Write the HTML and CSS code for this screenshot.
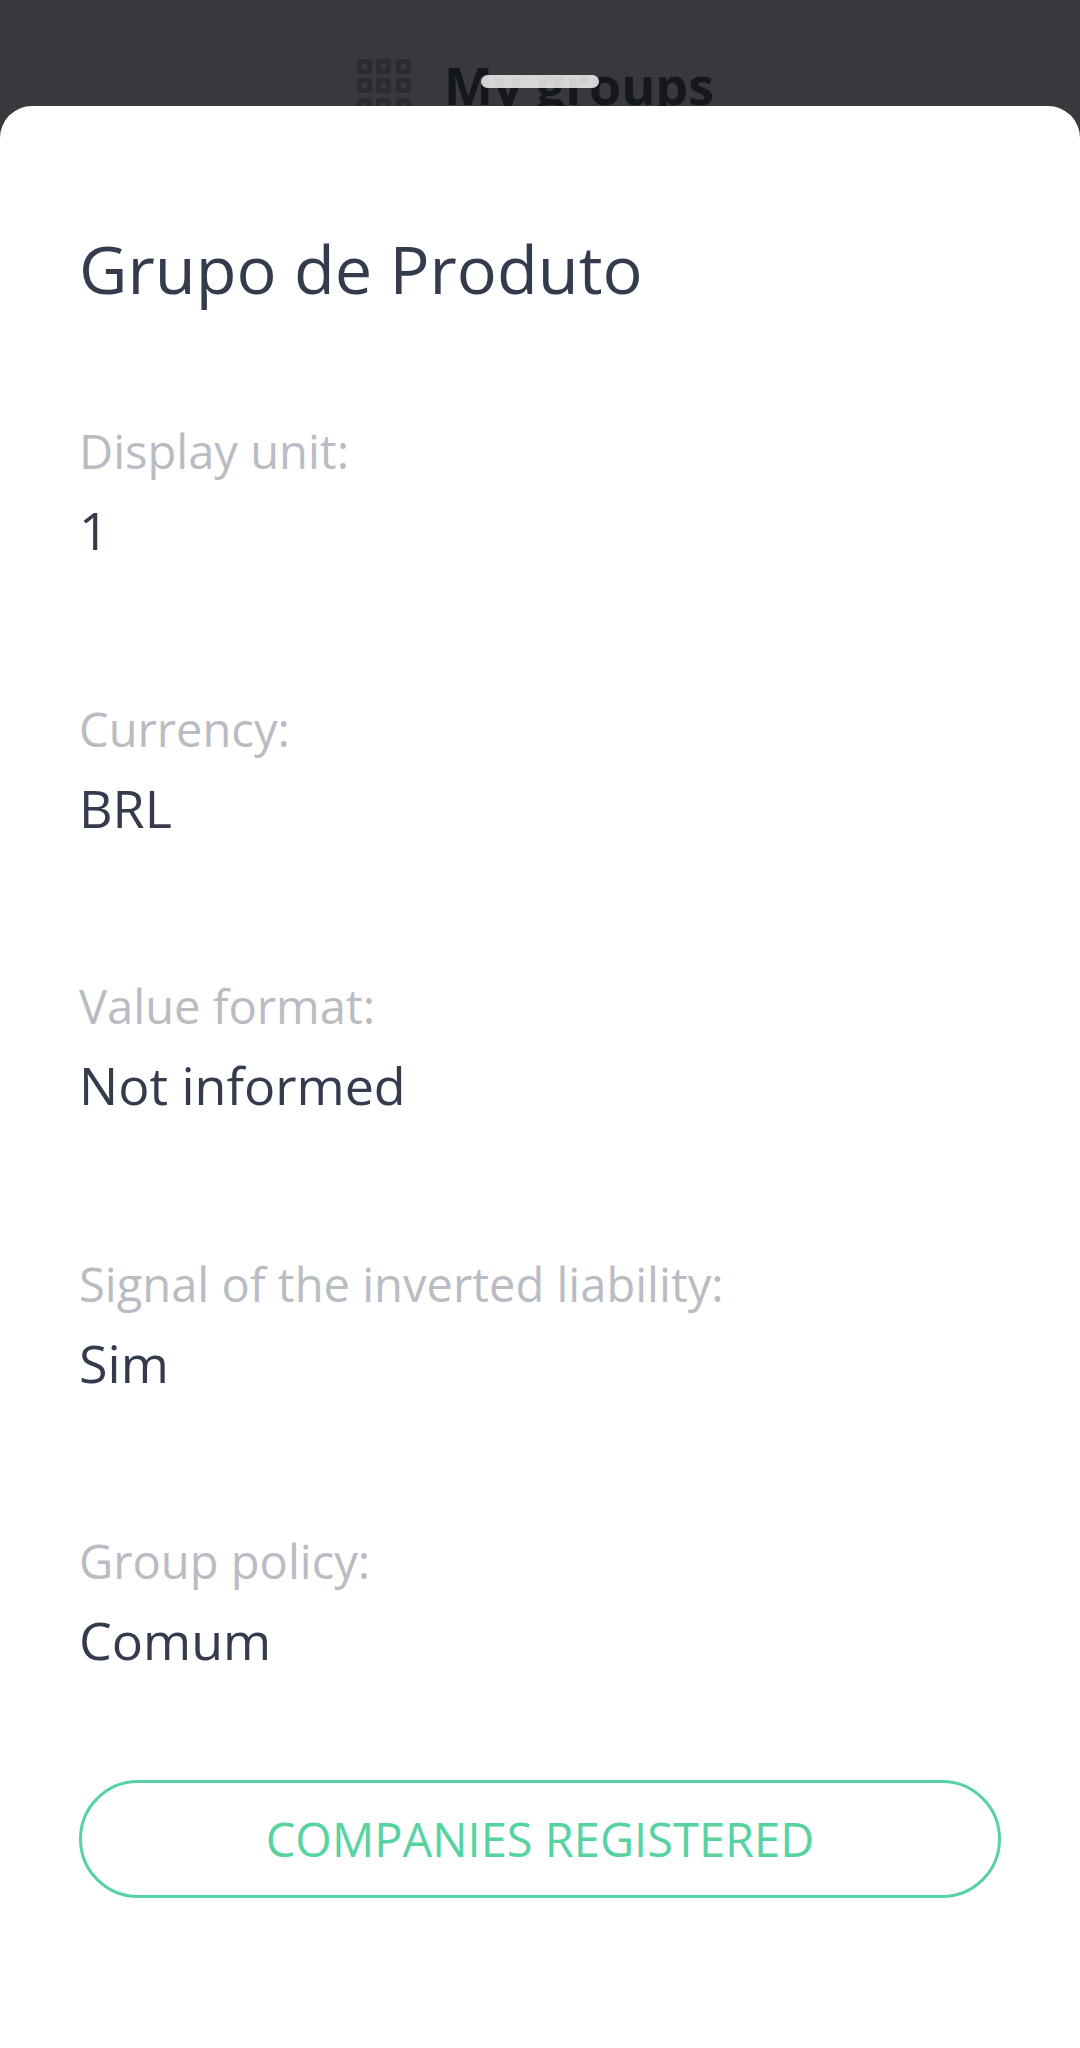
FILE: index.html
```html
<!DOCTYPE html>
<html lang="en">

<head>
    <meta charset="UTF-8">
    <meta name="viewport" content="width=device-width, initial-scale=1.0">
    <title>My groups</title>
    <link rel="stylesheet" href="styles.css">
</head>

<body>
    <div class="screen">
        <div class="header">
            <svg class="headerIcon" width="54" height="54" viewBox="0 0 54 54">
                <g fill="#2b2c30" fill-rule="evenodd">
                    <path d="M3 0h9a3 3 0 0 1 3 3v9a3 3 0 0 1-3 3H3a3 3 0 0 1-3-3V3a3 3 0 0 1 3-3zM5 5v5h5V5z"/>
                    <path d="M22 0h9a3 3 0 0 1 3 3v9a3 3 0 0 1-3 3h-9a3 3 0 0 1-3-3V3a3 3 0 0 1 3-3zM24 5v5h5V5z"/>
                    <path d="M42 0h9a3 3 0 0 1 3 3v9a3 3 0 0 1-3 3h-9a3 3 0 0 1-3-3V3a3 3 0 0 1 3-3zM44 5v5h5V5z"/>
                    <path d="M3 19h9a3 3 0 0 1 3 3v9a3 3 0 0 1-3 3H3a3 3 0 0 1-3-3v-9a3 3 0 0 1 3-3zM5 24v5h5v-5z"/>
                    <path d="M22 19h9a3 3 0 0 1 3 3v9a3 3 0 0 1-3 3h-9a3 3 0 0 1-3-3v-9a3 3 0 0 1 3-3zM24 24v5h5v-5z"/>
                    <path d="M42 19h9a3 3 0 0 1 3 3v9a3 3 0 0 1-3 3h-9a3 3 0 0 1-3-3v-9a3 3 0 0 1 3-3zM44 24v5h5v-5z"/>
                    <path d="M3 39h9a3 3 0 0 1 3 3v9a3 3 0 0 1-3 3H3a3 3 0 0 1-3-3v-9a3 3 0 0 1 3-3zM5 44v5h5v-5z"/>
                    <path d="M22 39h9a3 3 0 0 1 3 3v9a3 3 0 0 1-3 3h-9a3 3 0 0 1-3-3v-9a3 3 0 0 1 3-3zM24 44v5h5v-5z"/>
                    <path d="M42 39h9a3 3 0 0 1 3 3v9a3 3 0 0 1-3 3h-9a3 3 0 0 1-3-3v-9a3 3 0 0 1 3-3zM44 44v5h5v-5z"/>
                </g>
            </svg>
            <span class="headerTitle">My groups</span>
        </div>

        <div class="handle"></div>

        <div class="sheet">
            <h2 class="sheetTitle">Grupo de Produto</h2>
            <div class="fields">
                <div class="field">
                    <span class="fieldLabel">Display unit:</span>
                    <span class="fieldValue">1</span>
                </div>
                <div class="field">
                    <span class="fieldLabel">Currency:</span>
                    <span class="fieldValue">BRL</span>
                </div>
                <div class="field">
                    <span class="fieldLabel">Value format:</span>
                    <span class="fieldValue">Not informed</span>
                </div>
                <div class="field">
                    <span class="fieldLabel">Signal of the inverted liability:</span>
                    <span class="fieldValue">Sim</span>
                </div>
                <div class="field">
                    <span class="fieldLabel">Group policy:</span>
                    <span class="fieldValue">Comum</span>
                </div>
            </div>
            <button class="companiesButton">COMPANIES REGISTERED</button>
        </div>
    </div>
</body>

</html>
```
FILE: styles.css
```css
* {
    box-sizing: border-box;
}

body {
    margin: 0;
    font-family: "Open Sans", sans-serif;
}

.screen {
    position: relative;
    width: 1080px;
    height: 2048px;
    background-color: #38393d;
    overflow: hidden;
}

.header {
    display: flex;
    align-items: flex-start;
    justify-content: center;
    gap: 33px;
    padding-top: 59px;
    padding-right: 9px;
}

.headerTitle {
    font-size: 52px;
    font-weight: 700;
    line-height: 52px;
    color: #14171e;
}

.handle {
    position: absolute;
    top: 75px;
    left: 481px;
    width: 118px;
    height: 13px;
    border-radius: 7px;
    background-color: rgba(255, 255, 255, 0.8);
}

.sheet {
    position: absolute;
    top: 106px;
    left: 0;
    right: 0;
    bottom: 0;
    padding: 118px 79px 0 79px;
    border-radius: 32px 32px 0 0;
    background-color: white;
}

.sheetTitle {
    margin: 0 0 107px;
    font-size: 66.7px;
    font-weight: 400;
    line-height: 90px;
    color: #333b4d;
}

.fields {
    display: flex;
    flex-direction: column;
    gap: 134.5px;
}

.field {
    display: flex;
    flex-direction: column;
}

.fieldLabel {
    font-size: 47.1px;
    line-height: 60px;
    margin-bottom: 15px;
    color: #b9bcc3;
}

.fieldValue {
    font-size: 52px;
    line-height: 68px;
    color: #333b4d;
}

.companiesButton {
    display: block;
    width: 100%;
    height: 118px;
    margin-top: 106px;
    border: 3px solid #57d3a2;
    border-radius: 59px;
    background-color: white;
    font-family: inherit;
    font-size: 47px;
    color: #57d3a2;
}
```
